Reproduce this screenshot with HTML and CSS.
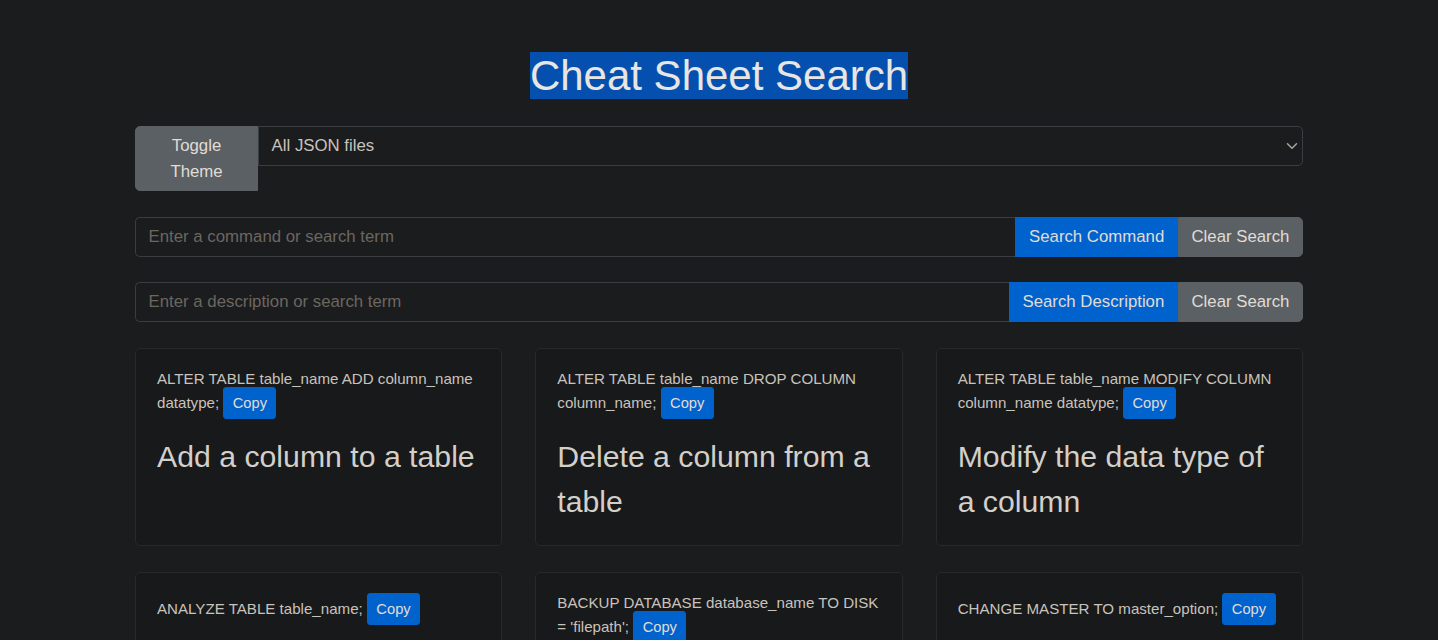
FILE: index.html
```html
<!DOCTYPE html>
<html lang="en">
<head>
<meta charset="utf-8">
<title>Cheat Sheet Search</title>
<link rel="stylesheet" href="styles.css">
</head>
<body>
<div class="container">
  <h1 class="title"><span class="sel">Cheat Sheet Search</span></h1>
  <div class="row-top">
    <button class="btn btn-secondary toggle">Toggle<br>Theme</button>
    <div class="select">
      <span>All JSON files</span>
      <svg class="chev" width="12" height="12" viewBox="0 0 16 16"><path d="M2 5l6 6 6-6" fill="none" stroke="#a9a49c" stroke-width="2" stroke-linecap="round" stroke-linejoin="round"/></svg>
    </div>
  </div>
  <div class="group">
    <div class="input">Enter a command or search term</div>
    <button class="btn btn-primary">Search Command</button>
    <button class="btn btn-secondary last">Clear Search</button>
  </div>
  <div class="group">
    <div class="input">Enter a description or search term</div>
    <button class="btn btn-primary">Search Description</button>
    <button class="btn btn-secondary last">Clear Search</button>
  </div>
  <div class="grid">
    <div class="card">
      <p class="cmd">ALTER TABLE table_name ADD column_name datatype; <button class="copy">Copy</button></p>
      <p class="desc">Add a column to a table</p>
    </div>
    <div class="card">
      <p class="cmd">ALTER TABLE table_name DROP COLUMN column_name; <button class="copy">Copy</button></p>
      <p class="desc">Delete a column from a table</p>
    </div>
    <div class="card">
      <p class="cmd">ALTER TABLE table_name MODIFY COLUMN column_name datatype; <button class="copy">Copy</button></p>
      <p class="desc">Modify the data type of a column</p>
    </div>
    <div class="card">
      <p class="cmd one">ANALYZE TABLE table_name; <button class="copy">Copy</button></p>
      <p class="desc">Analyze and store key distribution</p>
    </div>
    <div class="card">
      <p class="cmd">BACKUP DATABASE database_name TO DISK = 'filepath'; <button class="copy">Copy</button></p>
      <p class="desc">Back up a database</p>
    </div>
    <div class="card">
      <p class="cmd one">CHANGE MASTER TO master_option; <button class="copy">Copy</button></p>
      <p class="desc">Configure replication source</p>
    </div>
  </div>
</div>
</body>
</html>
```
FILE: styles.css
```css
* { box-sizing: border-box; }
html, body { margin: 0; padding: 0; }
body {
  background: #1b1c1e;
  color: #d3cfc9;
  font-family: "Liberation Sans", Arial, sans-serif;
  font-size: 16.8px;
  line-height: 1.5;
  overflow: hidden;
}
.container {
  width: 1168px;
  margin: 0 auto;
  padding-top: 51px;
}
.title {
  margin: 0 0 24.6px;
  text-align: center;
  font-weight: 400;
  font-size: 42px;
  line-height: 50.4px;
  color: #e8e6e3;
}
.sel { background: #0550ae; }
.btn {
  font-family: inherit;
  font-size: 16.8px;
  line-height: 25.2px;
  border: 1px solid transparent;
  padding: 6.3px 12.6px;
  color: #e0dcd6;
  cursor: pointer;
  white-space: nowrap;
}
.btn-primary { background: #0062cc; border-color: #0062cc; }
.btn-secondary { background: #5a6064; border-color: #5a6064; }
.row-top {
  display: flex;
  align-items: flex-start;
  margin-bottom: 26px;
}
.toggle {
  width: 123px;
  height: 65px;
  border-radius: 5px 0 0 5px;
  white-space: normal;
}
.select {
  flex: 1;
  height: 40px;
  display: flex;
  align-items: center;
  justify-content: space-between;
  padding: 0 4px 0 12.6px;
  border: 1px solid #3a3d41;
  border-radius: 0 5px 5px 0;
  background: #1b1c1e;
  color: #c8c3bc;
}
.chev { display: block; }
.group {
  display: flex;
  height: 40px;
  margin-bottom: 25px;
}
.input {
  flex: 1;
  border: 1px solid #3a3d41;
  border-right: none;
  border-radius: 5px 0 0 5px;
  padding: 0 12.6px;
  display: flex;
  align-items: center;
  color: #6b6760;
}
.group .btn { height: 40px; }
.group .last { border-radius: 0 5px 5px 0; }
.grid {
  display: grid;
  grid-template-columns: repeat(3, 1fr);
  column-gap: 33px;
  row-gap: 26px;
  margin-top: 26px;
}
.card {
  border: 1px solid #27292b;
  border-radius: 5px;
  background: #18191b;
  padding: 18px 21px 21px;
}
.cmd {
  margin: 0;
  font-size: 15.12px;
  line-height: 24px;
  color: #c8c3bc;
}
.cmd.one { margin-top: 6px; }
.copy {
  font-family: inherit;
  font-size: 14.7px;
  line-height: 22px;
  padding: 4.2px 8.4px;
  margin: -4.5px 0;
  border: 1px solid #0062cc;
  border-radius: 3px;
  background: #0062cc;
  color: #e0dcd6;
  cursor: pointer;
}
.desc {
  margin: 18.5px 0 0;
  font-size: 30.24px;
  line-height: 45.36px;
  color: #d3cfc9;
}
```
